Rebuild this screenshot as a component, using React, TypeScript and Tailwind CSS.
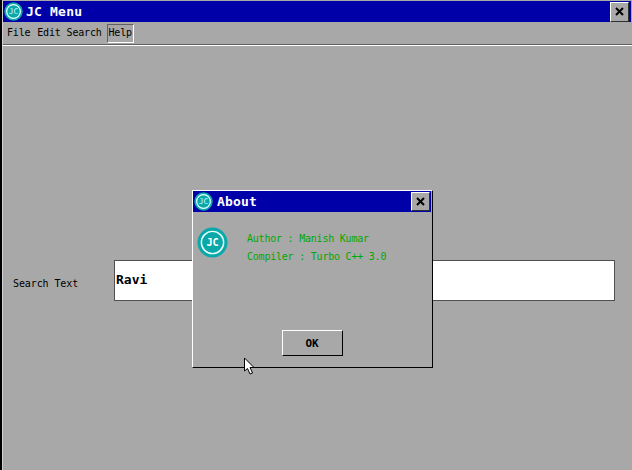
function Logo({ size }: { size: number }) {
  const big = size > 24;
  return (
    <svg width={size} height={size} viewBox="0 0 32 32" className="shrink-0">
      <circle cx="16" cy="16" r="15.5" fill="#0aa8a8" />
      <circle cx="16" cy="16" r="11.5" fill="none" stroke="#e8ffff" strokeWidth={big ? 1.5 : 2} />
      <text x="16" y={big ? 20 : 21} textAnchor="middle" fill={big ? "#ffffff" : "#d8ffff"} fontFamily="'DejaVu Sans Mono', monospace" fontWeight={big ? 700 : 400} fontSize={big ? 10.5 : 13}>JC</text>
    </svg>
  );
}

function CloseBox({ className }: { className: string }) {
  return (
    <div className={"flex items-center justify-center bg-[#a8a8a8] border border-t-white border-l-white border-r-[#303030] border-b-[#303030] " + className}>
      <svg width="9" height="9" viewBox="0 0 9 9">
        <path d="M1 1 L8 8 M8 1 L1 8" stroke="#000" strokeWidth="2" />
      </svg>
    </div>
  );
}

const mono = "font-['DejaVu_Sans_Mono','Liberation_Mono',monospace]";

export default function App() {
  return (
    <div className={"relative w-[632px] h-[470px] overflow-hidden bg-[#a8a8a8] border-l-2 border-black pl-px shadow-[inset_1px_0_0_#d0d0d0] " + mono}>
      <div className="pt-px">
        <div className="flex items-center justify-between h-[21px] bg-[#0000a8] pl-px pr-[2px] mr-px">
          <div className="flex items-center gap-[3px]">
            <Logo size={19} />
            <span className="text-white text-[13px] font-bold tracking-[0.2px] leading-none">JC Menu</span>
          </div>
          <CloseBox className="w-[19px] h-[20px]" />
        </div>
        <div className="flex items-center h-[22px] pl-1 text-[10px] text-black gap-[7px] leading-none tracking-[-0.2px]">
          <span>File</span>
          <span>Edit</span>
          <span className="-ml-[1px]">Search</span>
          <span className="flex items-center h-[19px] -ml-[2px] px-px border border-t-[#606060] border-l-[#606060] border-r-white border-b-white">Help</span>
        </div>
        <div className="h-px bg-[#606060]" />
        <div className="h-px bg-white" />
      </div>

      <div className="flex items-center mt-[214px] h-[41px] pl-[10px] pr-[17px]">
        <span className="w-[101px] pt-[6px] text-[10px] text-black leading-none tracking-[-0.1px]">Search Text</span>
        <div className="flex-1 h-[41px] bg-white border border-[#505050] pl-px pb-[2px] flex items-center">
          <span className="text-[13px] font-bold text-black leading-none">Ravi</span>
        </div>
      </div>

      <div className="absolute left-[190px] top-[190px] w-[241px] h-[178px] bg-[#a8a8a8] border-t border-l border-white border-r border-b border-r-black border-b-black">
        <div className="flex items-center justify-between h-[21px] bg-[#0000a8] pr-px mr-px">
          <div className="flex items-center gap-[4px] pl-px">
            <Logo size={19} />
            <span className="text-white text-[13px] font-bold tracking-[0.2px] leading-none">About</span>
          </div>
          <CloseBox className="w-[19px] h-[19px]" />
        </div>
        <div className="flex items-start pl-[4px] pt-[15px]">
          <Logo size={31} />
          <div className="ml-[19px] pt-[3px] text-[10px] text-[#00a800] leading-[18px] tracking-[-0.22px]">
            <div>Author : Manish Kumar</div>
            <div>Compiler : Turbo C++ 3.0</div>
          </div>
        </div>
        <div className="flex justify-center mt-[64px]">
          <div className="flex items-center justify-center w-[61px] h-[26px] ml-[-1px] border border-t-white border-l-white border-r-black border-b-black text-[11px] font-bold text-black leading-none">OK</div>
        </div>
      </div>

      <svg className="absolute left-[241px] top-[357px]" width="13" height="19" viewBox="0 0 13 19">
        <path d="M1.5 1 L1.5 14 L4.5 11.5 L7 17 L9.5 16 L7 10.5 L11 10.5 Z" fill="#fff" stroke="#000" strokeWidth="1" />
      </svg>
    </div>
  );
}
